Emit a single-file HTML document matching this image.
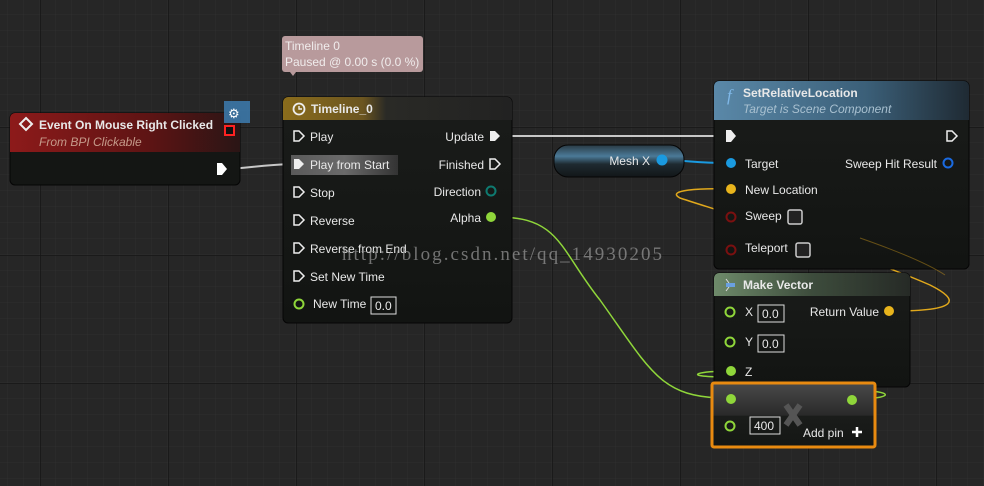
<!DOCTYPE html>
<html><head><meta charset="utf-8"><style>
html,body{margin:0;padding:0;background:#262626;overflow:hidden}
svg{display:block}
text{font-family:"Liberation Sans",sans-serif;fill:#e8e8e8;font-size:12px}
.b{font-weight:bold}
</style></head><body>
<svg width="984" height="486" viewBox="0 0 984 486" xmlns="http://www.w3.org/2000/svg">
<defs>
<pattern id="g" width="16" height="16" patternUnits="userSpaceOnUse" x="8" y="-1"><path d="M16 0V16M0 16H16" stroke="#2f2f2f" stroke-width="1" fill="none"/></pattern>
<pattern id="G" width="128" height="128" patternUnits="userSpaceOnUse" x="40" y="-1"><path d="M0 0V128M0 0H128" stroke="#161616" stroke-width="1.5" fill="none"/></pattern>
<linearGradient id="red" x1="0" x2="1"><stop offset="0" stop-color="#8d1a1a"/><stop offset=".6" stop-color="#5e1414"/><stop offset="1" stop-color="#2a1515"/></linearGradient>
<linearGradient id="gold" x1="0" x2="1"><stop offset="0" stop-color="#8a6c1c"/><stop offset=".35" stop-color="#6b5520"/><stop offset=".45" stop-color="#2a2a26"/><stop offset="1" stop-color="#222"/></linearGradient>
<linearGradient id="blue" x1="0" x2="1"><stop offset="0" stop-color="#5a88a8"/><stop offset=".6" stop-color="#3b5f78"/><stop offset="1" stop-color="#1f2a33"/></linearGradient>
<linearGradient id="grn" x1="0" x2="1"><stop offset="0" stop-color="#6e8a6a"/><stop offset=".5" stop-color="#3d4c3c"/><stop offset="1" stop-color="#262a26"/></linearGradient>
<linearGradient id="body" x1="0" y1="0" x2="0" y2="1"><stop offset="0" stop-color="#1a1c1a"/><stop offset="1" stop-color="#121412"/></linearGradient>
<linearGradient id="pill" x1="0" y1="0" x2="0" y2="1"><stop offset="0" stop-color="#2a3a44"/><stop offset=".35" stop-color="#4b7a98"/><stop offset=".6" stop-color="#1e2a30"/><stop offset="1" stop-color="#121618"/></linearGradient>
<linearGradient id="mul" x1="0" y1="0" x2="0" y2="1"><stop offset="0" stop-color="#4a4a4a"/><stop offset=".5" stop-color="#2a2a2a"/><stop offset=".52" stop-color="#1a1c1a"/><stop offset="1" stop-color="#141614"/></linearGradient>
<linearGradient id="pfs" x1="0" x2="1"><stop offset="0" stop-color="#5a5a5a"/><stop offset=".5" stop-color="#6a6a6a"/><stop offset="1" stop-color="#333"/></linearGradient>
</defs>
<rect width="984" height="486" fill="#262626"/>
<rect width="984" height="486" fill="url(#g)"/>
<rect width="984" height="486" fill="url(#G)"/>

<path d="M227 169 C250 168 260 165 292 164" stroke="#c8c8c8" stroke-width="2" fill="none"/>
<path d="M500 136 L727 136" stroke="#c8c8c8" stroke-width="2" fill="none"/>
<path d="M668 160 C690 161 700 163 727 163" stroke="#1a9ae0" stroke-width="2" fill="none"/>
<path d="M498 217 C560 217 560 250 600 300 C650 370 660 396 720 398" stroke="#8fd63a" stroke-width="1.5" fill="none"/>
<path d="M893 311 C960 311 960 300 930 285 C850 250 700 205 680 198 C665 190 700 188 730 189" stroke="#e0a81c" stroke-width="1.5" fill="none"/>
<path d="M730 371 C700 371 680 376 720 377" stroke="#8fd63a" stroke-width="1.5" fill="none"/>
<path d="M850 399 C890 399 895 393 870 391" stroke="#8fd63a" stroke-width="1.5" fill="none"/>

<rect x="10" y="113" width="230" height="72" rx="5" fill="#141614" stroke="#050505"/>
<path d="M15 113 H235 a5 5 0 0 1 5 5 V152 H10 V118 a5 5 0 0 1 5 -5z" fill="url(#red)"/>
<path d="M26 118 l6 6 -6 6 -6 -6z" fill="none" stroke="#eee" stroke-width="2"/>
<text x="39" y="129" class="b">Event On Mouse Right Clicked</text>
<text x="39" y="146" style="font-style:italic;fill:#c59a8a">From BPI Clickable</text>
<rect x="225" y="126" width="9" height="9" fill="#111" stroke="#f22" stroke-width="2"/>
<rect x="224" y="101" width="26" height="22" fill="#3c78a8" opacity=".9"/>
<text x="228" y="118" style="fill:#fff;font-size:13px">⚙</text>
<path d="M217 163 h5 l5 6 -5 6 h-5z" fill="#fff"/>

<rect x="282" y="36" width="141" height="36" rx="3" fill="#b89a9c"/>
<path d="M290 72 l3 4 3 -4z" fill="#b89a9c"/>
<text x="285" y="50" style="fill:#f0ecec">Timeline 0</text>
<text x="285" y="66" style="fill:#f0ecec">Paused @ 0.00 s (0.0 %)</text>

<rect x="283" y="97" width="229" height="226" rx="5" fill="url(#body)" stroke="#050505"/>
<path d="M288 97 H507 a5 5 0 0 1 5 5 V120 H283 V102 a5 5 0 0 1 5 -5z" fill="url(#gold)"/>
<circle cx="299" cy="109" r="5.5" fill="none" stroke="#eee" stroke-width="1.8"/><path d="M299 106 v3 h3" stroke="#eee" stroke-width="1.4" fill="none"/>
<text x="311" y="113" class="b">Timeline_0</text>
<rect x="291" y="155" width="107" height="20" fill="url(#pfs)"/>
<g fill="none" stroke="#eee" stroke-width="1.5">
<path d="M294 131 h5 l5 5 -5 5 h-5z"/>
<path d="M294 187 h5 l5 5 -5 5 h-5z"/>
<path d="M294 215 h5 l5 5 -5 5 h-5z"/>
<path d="M294 243 h5 l5 5 -5 5 h-5z"/>
<path d="M294 271 h5 l5 5 -5 5 h-5z"/>
<path d="M490 159 h5 l5 5 -5 5 h-5z"/>
</g>
<path d="M294 159 h5 l5 5 -5 5 h-5z" fill="#eee"/>
<path d="M490 131 h5 l5 5 -5 5 h-5z" fill="#eee"/>
<text x="310" y="141">Play</text>
<text x="310" y="169">Play from Start</text>
<text x="310" y="197">Stop</text>
<text x="310" y="225">Reverse</text>
<text x="310" y="253">Reverse from End</text>
<text x="310" y="281">Set New Time</text>
<text x="313" y="308">New Time</text>
<rect x="371" y="297" width="25" height="17" fill="none" stroke="#ddd"/><text x="375" y="310">0.0</text>
<circle cx="299" cy="304" r="4.5" fill="none" stroke="#8fd63a" stroke-width="2"/>
<text x="484" y="141" text-anchor="end">Update</text>
<text x="484" y="169" text-anchor="end">Finished</text>
<text x="481" y="196" text-anchor="end">Direction</text>
<text x="481" y="222" text-anchor="end">Alpha</text>
<circle cx="491" cy="191" r="4.5" fill="none" stroke="#0e7a70" stroke-width="2"/>
<circle cx="491" cy="217" r="5" fill="#8fd63a"/>

<rect x="554" y="145" width="130" height="32" rx="14" fill="url(#pill)" stroke="#050505"/>
<text x="650" y="165" text-anchor="end">Mesh X</text>
<circle cx="662" cy="160" r="5.5" fill="#1a9ae0"/>

<rect x="714" y="81" width="255" height="188" rx="5" fill="url(#body)" stroke="#050505"/>
<path d="M719 81 H964 a5 5 0 0 1 5 5 V120 H714 V86 a5 5 0 0 1 5 -5z" fill="url(#blue)"/>
<text x="727" y="101" style="font-family:'Liberation Serif',serif;font-style:italic;font-size:17px;fill:#7fb8e8">f</text>
<text x="743" y="97" class="b">SetRelativeLocation</text>
<text x="743" y="113" style="font-style:italic;fill:#a8c0d0">Target is Scene Component</text>
<path d="M726 130 h5 l5 6 -5 6 h-5z" fill="#eee"/>
<path d="M947 131 h5 l5 5 -5 5 h-5z" fill="none" stroke="#eee" stroke-width="1.5"/>
<circle cx="731" cy="163" r="5" fill="#1a9ae0"/>
<text x="745" y="168">Target</text>
<text x="937" y="168" text-anchor="end">Sweep Hit Result</text>
<circle cx="948" cy="163" r="4.5" fill="none" stroke="#1a6ae0" stroke-width="2"/>
<circle cx="731" cy="189" r="5" fill="#e8b41c"/>
<text x="745" y="194">New Location</text>
<circle cx="731" cy="217" r="4.5" fill="none" stroke="#7a1010" stroke-width="2"/>
<text x="745" y="220">Sweep</text>
<rect x="788" y="210" width="14" height="14" rx="2" fill="#222" stroke="#ccc" stroke-width="1.5"/>
<circle cx="731" cy="250" r="4.5" fill="none" stroke="#7a1010" stroke-width="2"/>
<text x="745" y="252">Teleport</text>
<rect x="796" y="243" width="14" height="14" rx="2" fill="#222" stroke="#ccc" stroke-width="1.5"/>
<path d="M860 238 C900 252 930 265 945 275" stroke="#e0a81c" stroke-width="1" fill="none" opacity=".4"/>

<rect x="714" y="273" width="196" height="114" rx="5" fill="url(#body)" stroke="#050505"/>
<path d="M719 273 H905 a5 5 0 0 1 5 5 V296 H714 V278 a5 5 0 0 1 5 -5z" fill="url(#grn)"/>
<rect x="726" y="283" width="9" height="4" fill="#6aa0e0"/><path d="M726 279 l3 4 M726 291 l3 -4" stroke="#ddd"/>
<text x="743" y="289" class="b">Make Vector</text>
<circle cx="730" cy="312" r="4.5" fill="none" stroke="#8fd63a" stroke-width="2"/>
<text x="745" y="316">X</text>
<rect x="758" y="305" width="26" height="17" fill="none" stroke="#ddd"/><text x="762" y="318">0.0</text>
<text x="879" y="316" text-anchor="end">Return Value</text>
<circle cx="889" cy="311" r="5" fill="#e8b41c"/>
<circle cx="730" cy="342" r="4.5" fill="none" stroke="#8fd63a" stroke-width="2"/>
<text x="745" y="346">Y</text>
<rect x="758" y="335" width="26" height="17" fill="none" stroke="#ddd"/><text x="762" y="348">0.0</text>
<circle cx="731" cy="371" r="5" fill="#8fd63a"/>
<text x="745" y="376">Z</text>

<rect x="712" y="383" width="163" height="64" rx="2" fill="url(#mul)" stroke="#e88a10" stroke-width="3"/>
<circle cx="731" cy="399" r="5" fill="#8fd63a"/>
<circle cx="852" cy="400" r="5" fill="#8fd63a"/>
<path d="M786 405 l14 20 M800 405 l-14 20" stroke="#555" stroke-width="6"/>
<circle cx="730" cy="426" r="4.5" fill="none" stroke="#8fd63a" stroke-width="2"/>
<rect x="750" y="417" width="30" height="17" fill="none" stroke="#ddd"/><text x="754" y="430">400</text>
<text x="803" y="437">Add pin</text>
<path d="M852 432 h10 M857 427 v10" stroke="#fff" stroke-width="2.5"/>

<text x="342" y="260" textLength="320" lengthAdjust="spacing" style="font-family:'Liberation Serif',serif;font-size:19px;fill:#9a9a9a;opacity:.7">http://blog.csdn.net/qq_14930205</text>
</svg>
</body></html>
